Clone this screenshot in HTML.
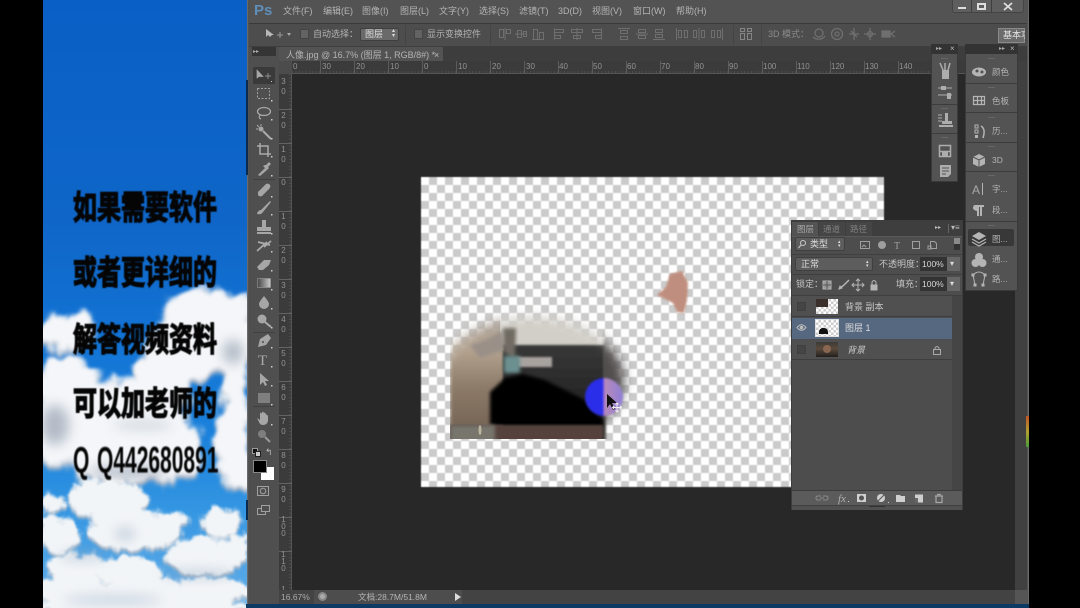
<!DOCTYPE html>
<html><head><meta charset="utf-8"><style>
html,body{margin:0;padding:0;background:#000;width:1080px;height:608px;overflow:hidden}
*{box-sizing:border-box}
body{font-family:"Liberation Sans","Noto Sans CJK SC",sans-serif;position:relative}
.a{position:absolute}
.t{position:absolute;white-space:nowrap;color:#b4b4b4;font-size:9px;line-height:12px;filter:blur(.35px)}
.big{position:absolute;left:73px;width:144px;white-space:nowrap;color:#050505;font-weight:700;font-size:24px;line-height:24px;height:24px;transform-origin:0 50%;transform:scaleY(1.38);font-family:"Noto Sans CJK SC",sans-serif;-webkit-text-stroke:1px #050505;filter:blur(.4px)}
.q{position:absolute;white-space:nowrap;color:#050505;font-weight:700;font-size:21px;line-height:24px;height:24px;top:450px;transform-origin:0 50%;transform:scaleY(1.78);font-family:"Liberation Sans",sans-serif;filter:blur(.4px)}
.r{position:absolute;top:62px;font-size:8px;line-height:10px;color:#929292;filter:blur(.3px)}
.v{position:absolute;left:280px;width:7px;font-size:8px;line-height:10px;color:#929292;text-align:center;filter:blur(.3px)}
.dock{position:absolute;background:#535353;}
.sep{position:absolute;height:1px;background:#3c3c3c}
.g{position:absolute;width:7px;height:1px;background:#666}
</style></head><body>

<!-- Sky -->
<div class="a" style="left:43px;top:0;width:204px;height:608px;overflow:hidden;background:linear-gradient(#0a5fc6 0,#0f66c8 220px,#1273d4 340px,#1b82dc 440px,#3496e2 510px,#62aee8 608px)">
<svg width="204" height="608" style="position:absolute;left:0;top:0">
<defs>
<filter id="cf" x="-10%" y="-10%" width="120%" height="120%" filterUnits="objectBoundingBox"><feGaussianBlur in="SourceGraphic" stdDeviation="2.500" result="bl"/><feTurbulence type="fractalNoise" baseFrequency=".055" numOctaves="3" seed="7" result="n"/><feDisplacementMap in="bl" in2="n" scale="20" xChannelSelector="R" yChannelSelector="G" result="d"/><feGaussianBlur in="d" stdDeviation="1.200"/></filter>
<filter id="cs" x="-10%" y="-10%" width="120%" height="120%"><feGaussianBlur in="SourceGraphic" stdDeviation="1.500" result="bl"/><feTurbulence type="fractalNoise" baseFrequency=".09" numOctaves="3" seed="3" result="n"/><feDisplacementMap in="bl" in2="n" scale="14" xChannelSelector="R" yChannelSelector="G" result="d"/><feGaussianBlur in="d" stdDeviation=".8"/></filter>
<filter id="b6" x="-60%" y="-60%" width="220%" height="220%"><feGaussianBlur stdDeviation="6"/></filter>
<g id="up">
<ellipse cx="165" cy="312" rx="46" ry="22"/><ellipse cx="185" cy="340" rx="28" ry="36"/><ellipse cx="140" cy="345" rx="36" ry="26"/>
<ellipse cx="130" cy="368" rx="38" ry="16"/><ellipse cx="192" cy="385" rx="12" ry="30"/>
<ellipse cx="190" cy="440" rx="17" ry="46"/><ellipse cx="200" cy="470" rx="14" ry="16"/>
<ellipse cx="22" cy="332" rx="26" ry="17"/><ellipse cx="36" cy="320" rx="14" ry="8"/>
<ellipse cx="24" cy="385" rx="30" ry="30"/><ellipse cx="22" cy="430" rx="36" ry="34"/>
<ellipse cx="90" cy="400" rx="55" ry="22"/><ellipse cx="110" cy="388" rx="36" ry="14"/>
<ellipse cx="105" cy="440" rx="52" ry="34"/><ellipse cx="60" cy="440" rx="42" ry="34"/>
<ellipse cx="125" cy="455" rx="35" ry="26"/><ellipse cx="85" cy="470" rx="55" ry="12"/>
</g>
<g id="lo">
<ellipse cx="65" cy="500" rx="40" ry="20"/><ellipse cx="50" cy="485" rx="20" ry="6"/><ellipse cx="10" cy="503" rx="12" ry="9"/>
<ellipse cx="92" cy="530" rx="48" ry="20"/><ellipse cx="130" cy="522" rx="14" ry="10"/>
<ellipse cx="178" cy="523" rx="20" ry="15"/>
<ellipse cx="17" cy="536" rx="20" ry="18"/><ellipse cx="8" cy="525" rx="10" ry="10"/>
<ellipse cx="162" cy="556" rx="40" ry="18"/><ellipse cx="195" cy="548" rx="12" ry="14"/>
<ellipse cx="85" cy="570" rx="34" ry="14"/><ellipse cx="35" cy="568" rx="30" ry="14"/>
<ellipse cx="30" cy="590" rx="42" ry="14"/><ellipse cx="105" cy="590" rx="46" ry="13"/><ellipse cx="165" cy="590" rx="42" ry="12"/><ellipse cx="100" cy="606" rx="110" ry="9"/>
</g>
</defs>
<use href="#up" fill="#a9b5c6" filter="url(#cf)" transform="translate(0,4)"/>
<use href="#up" fill="#f4f6f9" filter="url(#cf)"/>
<g filter="url(#b6)" fill="#98a3b2" opacity=".7">
<ellipse cx="12" cy="425" rx="14" ry="20"/><ellipse cx="85" cy="472" rx="40" ry="6"/><ellipse cx="190" cy="352" rx="10" ry="12"/><ellipse cx="100" cy="425" rx="30" ry="5" opacity=".5"/>
</g>
<use href="#lo" fill="#9fb2c8" filter="url(#cs)" transform="translate(0,3)"/>
<use href="#lo" fill="#f2f5f8" filter="url(#cs)"/>
<g filter="url(#b6)" fill="#9cadc2" opacity=".55"><ellipse cx="82" cy="534" rx="10" ry="6"/><ellipse cx="40" cy="556" rx="24" ry="4"/><ellipse cx="155" cy="574" rx="36" ry="4"/><ellipse cx="70" cy="600" rx="50" ry="4"/></g>
</svg>
</div>
<div class="big" style="top:193px">如果需要软件</div>
<div class="big" style="top:258px">或者更详细的</div>
<div class="big" style="top:325px">解答视频资料</div>
<div class="big" style="top:389px">可以加老师的</div>
<div class="q" style="left:73px">Q</div>
<div class="q" style="left:97px">Q442680891</div>

<!-- Window -->
<div class="a" style="left:247px;top:0;width:782px;height:604px;background:#535353;border-left:1px solid #6a6a6a;border-right:1px solid #6a6a6a"></div>
<div class="a" style="left:246px;top:604px;width:783px;height:4px;background:#0d3a63"></div>
<div class="a" style="left:246px;top:80px;width:2px;height:95px;background:#0a2a50"></div>
<div class="a" style="left:246px;top:500px;width:2px;height:20px;background:#0a2a50"></div>

<!-- Menu -->
<div class="t" style="left:254px;top:2px;font-size:15px;line-height:17px;font-weight:700;color:#5f8fb8">Ps</div>
<div class="t" style="left:283px;top:5px">文件(F)</div>
<div class="t" style="left:323px;top:5px">编辑(E)</div>
<div class="t" style="left:362px;top:5px">图像(I)</div>
<div class="t" style="left:400px;top:5px">图层(L)</div>
<div class="t" style="left:439px;top:5px">文字(Y)</div>
<div class="t" style="left:479px;top:5px">选择(S)</div>
<div class="t" style="left:519px;top:5px">滤镜(T)</div>
<div class="t" style="left:558px;top:5px">3D(D)</div>
<div class="t" style="left:592px;top:5px">视图(V)</div>
<div class="t" style="left:633px;top:5px">窗口(W)</div>
<div class="t" style="left:676px;top:5px">帮助(H)</div>
<!-- win buttons -->
<div class="a" style="left:952px;top:0;width:72px;height:13px;background:#5e5e5e;border:1px solid #444;border-top:0;border-radius:0 0 3px 3px"></div>
<div class="a" style="left:971px;top:0;width:1px;height:13px;background:#3f3f3f"></div>
<div class="a" style="left:991px;top:0;width:1px;height:13px;background:#3f3f3f"></div>
<div class="a" style="left:958px;top:7px;width:8px;height:2px;background:#ddd"></div>
<div class="a" style="left:977px;top:3px;width:9px;height:7px;border:2px solid #ddd"></div>
<svg class="a" style="left:1003px;top:2px" width="10" height="9"><path d="M1 1L9 8M9 1L1 8" stroke="#ddd" stroke-width="1.800"/></svg>

<!-- Options -->
<div class="a" style="left:249px;top:23px;width:778px;height:24px;background:#4d4d4d;border-top:1px solid #3a3a3a;border-bottom:1px solid #3e3e3e"></div>
<svg class="a" style="left:265px;top:28px" width="26" height="12"><path d="M1 1V9L3 7 5 9 7 7H9Z" fill="#b8b8b8"/><path d="M12 7H18M15 4V10" stroke="#999"/><path d="M22 5H26L24 8Z" fill="#aaa"/></svg>
<div class="a" style="left:300px;top:29px;width:9px;height:10px;background:#636363;border:1px solid #444"></div>
<div class="t" style="left:313px;top:28px">自动选择：</div>
<div class="a" style="left:360px;top:28px;width:39px;height:13px;background:#6a6a6a;border:1px solid #3f3f3f;border-radius:2px"></div>
<div class="t" style="left:365px;top:28px;color:#ddd">图层</div>
<div class="t" style="left:392px;top:29px;font-size:6px;line-height:5px;color:#ddd">▴<br>▾</div>
<div class="a" style="left:414px;top:29px;width:9px;height:10px;background:#636363;border:1px solid #444"></div>
<div class="t" style="left:427px;top:28px">显示变换控件</div>
<svg class="a" style="left:495px;top:26px;filter:blur(.3px)" width="235" height="16" fill="none" stroke="#6f6f6f">
<g transform="translate(10,8)"><path d="M0 -6V6M-5.500 -4.500h4v8h-4ZM1.500 -4.500h4v4h-4Z"/></g>
<g transform="translate(26,8)"><path d="M-6 0H6M-3.500 -3.500h4v7h-4ZM2.500 -2.500h3v5h-3Z"/></g>
<g transform="translate(43,8)"><path d="M-6 5.500H6M-4.500 -4.500h4v10h-4ZM1.500 -1.500h4v7h-4Z"/></g>
<g transform="translate(65,8)"><path d="M-5.500 -5.500v11M-5.500 -4.500h9v3h-9ZM-5.500 1.500h6v3h-6Z"/></g>
<g transform="translate(82,8)"><path d="M0 -6v12M-5.500 -4.500h11v3h-11ZM-3.500 1.500h7v3h-7Z"/></g>
<g transform="translate(101,8)"><path d="M5.500 -5.500v11M-3.500 -4.500h9v3h-9ZM-.5 1.500h6v3h-6Z"/></g>
<g transform="translate(129,8)"><path d="M-6 -5.500H6M-3.500 -3.500h7v3h-7ZM-3.500 2.500h7v3h-7Z"/></g>
<g transform="translate(147,8)"><path d="M-6 0H6M-3.500 -4.500h7v3h-7ZM-3.500 1.500h7v3h-7Z"/></g>
<g transform="translate(164,8)"><path d="M-6 5.500H6M-3.500 -4.500h7v3h-7ZM-3.500 .5h7v3h-7Z"/></g>
<g transform="translate(187,8)"><path d="M-5.500 -6v12M-3.500 -3.500h3v7h-3ZM2.500 -3.500h3v7h-3Z"/></g>
<g transform="translate(204,8)"><path d="M0 -6v12M-5.500 -3.500h3v7h-3ZM2.500 -3.500h3v7h-3Z"/></g>
<g transform="translate(222,8)"><path d="M5.500 -6v12M-5.500 -3.500h3v7h-3ZM.5 -3.500h3v7h-3Z"/></g>
</svg>
<svg class="a" style="left:739px;top:27px" width="16" height="14" fill="none" stroke="#858585"><path d="M1.500 1.500h4v3h-4ZM8.500 1.500h4v3h-4ZM1.500 6.500h4v6h-4ZM8.500 6.500h4v6h-4Z"/></svg>
<div class="a" style="left:490px;top:25px;width:1px;height:20px;background:#444"></div>
<div class="a" style="left:405px;top:25px;width:1px;height:20px;background:#444"></div>
<div class="a" style="left:733px;top:25px;width:1px;height:20px;background:#444"></div>
<div class="a" style="left:761px;top:25px;width:1px;height:20px;background:#444"></div>
<div class="t" style="left:768px;top:28px;color:#8b8b8b">3D 模式：</div>
<svg class="a" style="left:812px;top:27px;filter:blur(.3px)" width="86" height="15" fill="none" stroke="#6f6f6f" stroke-width="1.300"><circle cx="7" cy="6" r="4"/><path d="M1 10C4 13 10 13 13 9"/><circle cx="25" cy="7" r="5.500"/><circle cx="25" cy="7" r="2"/><path d="M42 1V13M37 7H47M39 4L45 10"/><path d="M58 1V13M52 7H64"/><circle cx="58" cy="7" r="2.500"/><rect x="70" y="4" width="8" height="6" fill="#6f6f6f"/><path d="M83 4L79 7 83 10"/></svg>
<div class="a" style="left:998px;top:28px;width:27px;height:15px;background:#6c6c6c;border:1px solid #8a8a8a;overflow:hidden"></div>
<div class="t" style="left:1003px;top:29px;color:#e4e4e4;width:22px;overflow:hidden">基本功</div>

<!-- Tab row -->
<div class="a" style="left:249px;top:47px;width:778px;height:14px;background:#3d3d3d"></div>
<div class="a" style="left:279px;top:47px;width:164px;height:14px;background:#535353"></div>
<div class="t" style="left:286px;top:49px;color:#b4b4b4">人像.jpg @ 16.7% (图层 1, RGB/8#) *</div>
<div class="t" style="left:434px;top:49px;color:#bbb">×</div>

<!-- Canvas area -->
<div class="a" style="left:279px;top:61px;width:748px;height:529px;background:#282828"></div>
<!-- rulers -->
<div class="a" style="left:279px;top:61px;width:748px;height:13px;background:#3b3b3b;border-bottom:1px solid #555"></div>
<div class="a" style="left:279px;top:61px;width:13px;height:529px;background:#3b3b3b;border-right:1px solid #555"></div>
<div class="a" style="left:279px;top:61px;width:13px;height:13px;background:#4c4c4c"></div>
<div class="a" style="left:320px;top:61px;width:611px;height:12px;background:repeating-linear-gradient(90deg,#5c5c5c 0 1px,transparent 1px 34px)"></div>
<div class="a" style="left:292px;top:71px;width:639px;height:2px;background:repeating-linear-gradient(90deg,#4d4d4d 0 1px,transparent 1px 3.400px)"></div>
<div class="a" style="left:289px;top:74px;width:2px;height:516px;background:repeating-linear-gradient(#4d4d4d 0 1px,transparent 1px 3.400px)"></div>
<div class="a" style="left:279px;top:109px;width:13px;height:1px;background:#626262;box-shadow:0 34px #626262,0 68px #626262,0 102px #626262,0 136px #626262,0 170px #626262,0 204px #626262,0 238px #626262,0 272px #626262,0 306px #626262,0 340px #626262,0 374px #626262,0 408px #626262,0 442px #626262"></div>

<span class="r" style="left:293px">0</span><span class="r" style="left:322px">30</span><span class="r" style="left:356px">20</span><span class="r" style="left:390px">10</span><span class="r" style="left:424px">0</span><span class="r" style="left:458px">10</span><span class="r" style="left:492px">20</span><span class="r" style="left:526px">30</span><span class="r" style="left:559px">40</span><span class="r" style="left:593px">50</span><span class="r" style="left:627px">60</span><span class="r" style="left:661px">70</span><span class="r" style="left:695px">80</span><span class="r" style="left:729px">90</span><span class="r" style="left:763px">100</span><span class="r" style="left:797px">110</span><span class="r" style="left:831px">120</span><span class="r" style="left:865px">130</span><span class="r" style="left:899px">140</span>

<div class="v" style="top:77px">3<br>0</div><div class="v" style="top:111px">2<br>0</div><div class="v" style="top:145px">1<br>0</div><div class="v" style="top:178px">0</div><div class="v" style="top:212px">1<br>0</div><div class="v" style="top:246px">2<br>0</div><div class="v" style="top:281px">3<br>0</div><div class="v" style="top:315px">4<br>0</div><div class="v" style="top:349px">5<br>0</div><div class="v" style="top:383px">6<br>0</div><div class="v" style="top:417px">7<br>0</div><div class="v" style="top:451px">8<br>0</div><div class="v" style="top:485px">9<br>0</div><div class="v" style="top:516px;line-height:7px">1<br>0<br>0</div><div class="v" style="top:551px;line-height:7px">1<br>1<br>0</div><div class="v" style="top:586px;line-height:7px">1</div>

<!-- Document -->
<div class="a" style="left:421px;top:177px;width:463px;height:310px;background-color:#fff;background-image:repeating-conic-gradient(#cbcbcb 0 25%,#fff 0 50%);background-size:16px 16px;filter:blur(.5px)"></div>
<svg class="a" style="left:421px;top:177px" width="463" height="310" viewBox="421 177 463 310">
<defs>
<filter id="fe" x="-30%" y="-30%" width="160%" height="160%"><feGaussianBlur stdDeviation="5.500"/></filter>
<filter id="s1" x="-20%" y="-20%" width="140%" height="140%"><feGaussianBlur stdDeviation="1.800"/></filter>
<filter id="s2" x="-20%" y="-20%" width="140%" height="140%"><feGaussianBlur stdDeviation="1"/></filter>
<mask id="m" maskUnits="userSpaceOnUse" x="421" y="177" width="463" height="310"><ellipse cx="532" cy="380" rx="92" ry="63" fill="#fff" filter="url(#fe)"/><rect x="440" y="392" width="166" height="60" fill="#fff" filter="url(#s2)"/></mask>
<clipPath id="c"><rect x="450" y="300" width="200" height="139"/></clipPath>
<linearGradient id="sk" x1="0" y1="0" x2="0" y2="1"><stop offset="0" stop-color="#a8a09a"/><stop offset=".3" stop-color="#b3a38f"/><stop offset=".6" stop-color="#8c7a68"/><stop offset="1" stop-color="#6f5e4e"/></linearGradient>
<linearGradient id="dk" x1="0" y1="0" x2="0" y2="1"><stop offset="0" stop-color="#383838"/><stop offset=".6" stop-color="#242424"/><stop offset="1" stop-color="#1a1a1a"/></linearGradient>
<linearGradient id="ph" x1="0" y1="0" x2="1" y2="0"><stop offset="0" stop-color="#2b2de8"/><stop offset=".5" stop-color="#2b2de8"/><stop offset=".5" stop-color="#b889b8"/><stop offset="1" stop-color="#8f7fd8"/></linearGradient>
</defs>
<path d="M657 295L666 287 670 274 682 271 688 283 687 300 684 313 677 312 673 303 663 298Z" fill="#c08e7e" filter="url(#s2)"/>
<g clip-path="url(#c)"><g mask="url(#m)">
<rect x="450" y="310" width="62" height="130" fill="url(#sk)" filter="url(#s1)"/>
<rect x="500" y="300" width="150" height="50" fill="#d2cfc8"/>
<rect x="503" y="345" width="150" height="95" fill="url(#dk)" filter="url(#s2)"/>
<path d="M603 300H660V440H603Z" fill="#5a5654" opacity=".8" filter="url(#s2)"/>
<path d="M470 345Q490 340 502 330L505 350 480 358Z" fill="#9a9088" filter="url(#s1)"/>
<path d="M503 328L516 328 515 360 504 352Z" fill="#6f6a62" filter="url(#s1)"/>
<rect x="517" y="357" width="35" height="10" fill="#a8a39f" filter="url(#s2)"/>
<rect x="504" y="356" width="16" height="17" fill="#6c9090" filter="url(#s1)"/>
<path d="M490 392L505 378 523 374 545 380 565 390 585 400 603 420V426H490Z" fill="#040405" filter="url(#s1)"/>
<path d="M450 425H603V445H450Z" fill="#55433e" filter="url(#s2)"/>
<path d="M450 425H495V445H450Z" fill="#77756c" filter="url(#s1)"/>
<ellipse cx="480" cy="430" rx="1.500" ry="5" fill="#bdb6a0"/>
</g></g>
<circle cx="604" cy="397" r="19" fill="url(#ph)" filter="url(#s2)"/>
<path d="M607 394V408L610 404 613 410 615 409 612 403 617 403Z" fill="#111"/>
<path d="M617 403V412M612.500 407.500H621.500M615.500 404.500L617 403 618.500 404.500M615.500 410.500L617 412 618.500 410.500M614 406L612.500 407.500 614 409M620 406L621.500 407.500 620 409" stroke="#eee" stroke-width="1" fill="none"/>
</svg>

<!-- Toolbar -->
<div class="a" style="left:249px;top:47px;width:30px;height:557px;background:#4f4f4f"></div>
<div class="a" style="left:252px;top:47px;width:24px;height:9px;background:#353535"></div>
<div class="t" style="left:253px;top:46px;font-size:6px;color:#aaa">▸▸</div>
<div class="a" style="left:253px;top:67px;width:22px;height:17px;background:#3a3a3a;border-radius:2px"></div>
<div class="a" style="left:253px;top:179px;width:22px;height:1px;background:#404040;box-shadow:0 153px #404040,0 227px #404040"></div>
<svg class="a" style="left:250px;top:60px;filter:blur(.35px)" width="28" height="390" viewBox="0 60 28 390" fill="#a6a6a6" stroke="none">
<g transform="translate(13,75)"><path d="M-6 -5V3L-4 1.500-2.500 1.500H0ZM2 1H8M5 -2V4" stroke="#a6a6a6" stroke-width=".7"/></g>
<g transform="translate(14,94)"><rect x="-6.500" y="-5.500" width="12" height="10" fill="none" stroke="#a0a0a0" stroke-dasharray="2 1.500"/></g>
<g transform="translate(14,113)" fill="none" stroke="#aaa" stroke-width="1.200"><ellipse cx="0" cy="-1.500" rx="6.500" ry="4"/><path d="M-4 2Q-6 5-3 6"/></g>
<g transform="translate(14,132)"><path d="M-1 -1L7 7" stroke="#aaa" stroke-width="2"/><circle cx="-3" cy="-3" r="2.500"/><path d="M-3 -8V-6M-8 -3H-6M-7 -7L-5 -5" stroke="#aaa"/></g>
<g transform="translate(14,150)" fill="none" stroke="#aaa" stroke-width="1.500"><path d="M-4 -7V4H7M-7 -4H4V7"/></g>
<g transform="translate(14,169)"><path d="M-6 6L1 -1 3 1-4 7Z"/><path d="M2 -4L5 -7 7 -5 4 -2 5 -1 3 1-1 -3 1 -4Z"/></g>
<g transform="translate(14,190)"><path d="M-6 2L2 -6Q5 -7 6 -5 7 -3 5 -1L-2 6Q-5 7-6 5Z"/></g>
<g transform="translate(14,208)"><path d="M-7 6Q-6 2-3 2L6 -7 7 -6-1 4Q-3 7-7 6Z"/></g>
<g transform="translate(14,227)"><path d="M-2 -7H2V0H7V4H-7V0H-2Z"/><rect x="-7" y="5" width="14" height="2"/></g>
<g transform="translate(14,245)" fill="none" stroke="#aaa" stroke-width="1.800"><path d="M-7 6L3 -3M-6 -3L6 0M0 2L7 -4"/></g>
<g transform="translate(14,264)"><path d="M-7 3L0 -4H7L5 1-1 6H-5Z"/></g>
<g transform="translate(14,283)"><defs><linearGradient id="gr"><stop offset="0" stop-color="#444"/><stop offset="1" stop-color="#ccc"/></linearGradient></defs><rect x="-6.500" y="-4.500" width="13" height="9" fill="url(#gr)" stroke="#999" stroke-width=".6"/></g>
<g transform="translate(14,302)"><path d="M0 -6Q5 0 5 2A5 5 0 0 1-5 2Q-5 0 0 -6Z"/></g>
<g transform="translate(14,321)"><circle cx="-2" cy="-2" r="4.500"/><path d="M1 1L7 6" stroke="#aaa" stroke-width="2"/></g>
<g transform="translate(14,341)"><path d="M-6 6L-4 -2 4 -7 7 -3 2 4Z"/><circle cx="-1" cy="1" r="1" fill="#4f4f4f"/></g>
<text x="8" y="365" font-family="Liberation Serif" font-size="15" fill="#aaa">T</text>
<g transform="translate(14,379)"><path d="M-4 -6V6L-1 3 1 7 3 6 1 2H5Z"/></g>
<g transform="translate(14,398)"><rect x="-6" y="-5" width="12" height="10" fill="#7f7f7f"/></g>
<g transform="translate(14,418)"><path d="M-7 0L-4 2V-5Q-3 -6-2 -4V0-6Q-1 -7 0 -5V0-5Q1 -6 2 -4V0-3Q3 -4 4 -2V3Q3 7-1 7-4 7-5 4Z"/></g>
<g transform="translate(14,436)"><circle cx="-2" cy="-2" r="4" fill="#7e7e7e"/><path d="M1 1L6 6" stroke="#999" stroke-width="2"/></g>
<g fill="#ccc"><rect x="21" y="81" width="1" height="1"/><rect x="21" y="100" width="1.500" height="1.500"/><rect x="21" y="119" width="1.500" height="1.500"/><rect x="21" y="138" width="1.500" height="1.500"/><rect x="21" y="156" width="1.500" height="1.500"/><rect x="21" y="175" width="1.500" height="1.500"/><rect x="21" y="196" width="1.500" height="1.500"/><rect x="21" y="214" width="1.500" height="1.500"/><rect x="21" y="233" width="1.500" height="1.500"/><rect x="21" y="251" width="1.500" height="1.500"/><rect x="21" y="270" width="1.500" height="1.500"/><rect x="21" y="289" width="1.500" height="1.500"/><rect x="21" y="308" width="1.500" height="1.500"/><rect x="21" y="327" width="1.500" height="1.500"/><rect x="21" y="347" width="1.500" height="1.500"/><rect x="21" y="366" width="1.500" height="1.500"/><rect x="21" y="385" width="1.500" height="1.500"/><rect x="21" y="404" width="1.500" height="1.500"/><rect x="21" y="424" width="1.500" height="1.500"/></g>
</svg>
<div class="a" style="left:252px;top:448px;width:6px;height:6px;background:#111;border:1px solid #999"></div>
<div class="a" style="left:255px;top:451px;width:6px;height:6px;background:#ccc;border:1px solid #222"></div>
<div class="t" style="left:265px;top:446px;font-size:9px;color:#bbb">↰</div>
<div class="a" style="left:261px;top:467px;width:13px;height:13px;background:#fff"></div>
<div class="a" style="left:253px;top:460px;width:14px;height:13px;background:#000;border:1px solid #888"></div>
<svg class="a" style="left:256px;top:484px" width="16" height="34" fill="none" stroke="#a0a0a0"><rect x="1.500" y="2.500" width="11" height="9"/><circle cx="7" cy="7" r="2.800"/><rect x="1.500" y="24.500" width="8" height="6"/><rect x="5.500" y="21.500" width="8" height="6" fill="#4f4f4f"/></svg>

<!-- Status -->
<div class="a" style="left:279px;top:590px;width:748px;height:14px;background:#434343"></div>
<div class="a" style="left:314px;top:590px;width:148px;height:14px;background:#4d4d4d"></div>
<div class="t" style="left:281px;top:591px;color:#aaa;font-size:8.500px">16.67%</div>
<div class="a" style="left:318px;top:592px;width:9px;height:9px;border-radius:50%;background:#aaa;border:2px solid #888"></div>
<div class="t" style="left:358px;top:591px;font-size:8.500px;color:#b5b5b5">文档:28.7M/51.8M</div>
<div class="a" style="left:455px;top:593px;border-left:6px solid #ddd;border-top:4px solid transparent;border-bottom:4px solid transparent"></div>
<div class="a" style="left:1015px;top:590px;width:12px;height:14px;background:#555"></div>
<div class="a" style="left:1015px;top:61px;width:12px;height:529px;background:#404040"></div>
<div class="a" style="left:1026px;top:416px;width:3px;height:16px;background:linear-gradient(#c05525,#b0a030)"></div>
<div class="a" style="left:1026px;top:432px;width:3px;height:15px;background:linear-gradient(#b0a030,#4a9a3a)"></div>

<!-- Dock 1 -->
<div class="dock" style="left:931px;top:44px;width:27px;height:138px;border:1px solid #3a3a3a"></div>
<div class="a" style="left:931px;top:44px;width:27px;height:10px;background:#333"></div>
<div class="t" style="left:936px;top:44px;font-size:6px;line-height:10px;color:#aaa">▸▸</div><div class="t" style="left:950px;top:44px;font-size:8px;line-height:10px;color:#bbb">×</div>
<div class="g" style="left:941px;top:58px"></div><div class="sep" style="left:932px;top:104px;width:25px"></div><div class="g" style="left:941px;top:108px"></div><div class="sep" style="left:932px;top:133px;width:25px"></div><div class="g" style="left:941px;top:137px"></div>
<svg class="a" style="left:936px;top:62px;filter:blur(.3px)" width="18" height="115" fill="#adadad" stroke="none">
<rect x="6" y="8" width="7" height="9"/><path d="M4 1L7 8M9 1V8M14 1L12 8" stroke="#adadad" stroke-width="1.500"/>
<path d="M2 26H16M2 33H16" stroke="#adadad"/><rect x="5" y="24" width="5" height="4"/><rect x="11" y="31" width="4" height="6"/>
<path d="M2 53H6M2 56H6M2 59H6" stroke="#adadad"/><rect x="9" y="51" width="3" height="8"/><rect x="6" y="59" width="10" height="3"/><rect x="3" y="63" width="14" height="2"/>
<path d="M3.500 83.500h11v11h-11ZM3.500 89.500h11" fill="none" stroke="#adadad" stroke-width="1.500"/><rect x="6" y="90" width="6" height="4"/>
<path d="M4 103H15V112L11 116H4Z"/><path d="M6 106H13M6 109H13M6 112H10" stroke="#535353"/>
</svg>

<!-- Dock 2 -->
<div class="dock" style="left:965px;top:44px;width:53px;height:247px;border:1px solid #3a3a3a"></div>
<div class="a" style="left:965px;top:44px;width:53px;height:10px;background:#333"></div>
<div class="t" style="left:999px;top:44px;font-size:6px;line-height:10px;color:#aaa">▸▸</div><div class="t" style="left:1010px;top:44px;font-size:8px;line-height:10px;color:#bbb">×</div>
<div class="sep" style="left:966px;top:83px;width:51px"></div><div class="sep" style="left:966px;top:112px;width:51px"></div><div class="sep" style="left:966px;top:142px;width:51px"></div><div class="sep" style="left:966px;top:171px;width:51px"></div><div class="sep" style="left:966px;top:221px;width:51px"></div>
<div class="g" style="left:988px;top:58px"></div><div class="g" style="left:988px;top:87px"></div><div class="g" style="left:988px;top:117px"></div><div class="g" style="left:988px;top:146px"></div><div class="g" style="left:988px;top:175px"></div><div class="g" style="left:988px;top:225px"></div>
<div class="a" style="left:968px;top:229px;width:46px;height:17px;background:#383838;border-radius:2px"></div>
<svg class="a" style="left:970px;top:62px;filter:blur(.3px)" width="20" height="225" fill="#b4b4b4">
<ellipse cx="9" cy="10" rx="7" ry="4.500"/><circle cx="7" cy="9" r="1.500" fill="#535353"/><circle cx="12" cy="10" r="1.500" fill="#535353"/>
<path d="M3.500 34.500h11v8h-11ZM3.500 38.500h11M7.500 34.500v8M11.500 34.500v8" fill="none" stroke="#b4b4b4" stroke-width="1.200"/>
<rect x="5" y="63" width="3" height="3" fill="none" stroke="#b4b4b4"/><rect x="5" y="68" width="3" height="3" fill="none" stroke="#b4b4b4"/><rect x="5" y="73" width="3" height="3"/><path d="M11 64Q16 67 13 76" fill="none" stroke="#b4b4b4" stroke-width="1.500"/>
<path d="M9 92L15 95V102L9 105 3 102V95Z"/><path d="M3 95L9 98 15 95M9 98V105" stroke="#535353" fill="none"/>
<text x="2" y="132" font-size="12" font-family="Liberation Sans" fill="#aaa">A</text><rect x="12" y="121" width="1" height="12"/>
<path d="M5 143H14V145H12V154H10V145H9V154H7V149Q3 148 3 146Q3 143 5 143Z"/>
<path d="M9 170L16 174 9 178 2 174Z"/><path d="M2 177L9 181 16 177M2 180L9 184 16 180" stroke="#b4b4b4" fill="none" stroke-width="1.200"/>
<circle cx="9" cy="195" r="4"/><circle cx="5.500" cy="201" r="4"/><circle cx="12.500" cy="201" r="4"/>
<path d="M3 213Q9 207 15 213M3 213L5 223M15 213L13 223" fill="none" stroke="#b4b4b4"/><rect x="1.500" y="211.500" width="3" height="3"/><rect x="13.500" y="211.500" width="3" height="3"/><rect x="3.500" y="221.500" width="3" height="3"/><rect x="11.500" y="221.500" width="3" height="3"/>
</svg>
<div class="t" style="left:992px;top:66px;font-size:8.500px">颜色</div>
<div class="t" style="left:992px;top:95px;font-size:8.500px">色板</div>
<div class="t" style="left:992px;top:125px;font-size:8.500px">历...</div>
<div class="t" style="left:992px;top:154px;font-size:8.500px">3D</div>
<div class="t" style="left:992px;top:183px;font-size:8.500px">字...</div>
<div class="t" style="left:992px;top:204px;font-size:8.500px">段...</div>
<div class="t" style="left:992px;top:233px;font-size:8.500px">图...</div>
<div class="t" style="left:992px;top:253px;font-size:8.500px">通...</div>
<div class="t" style="left:992px;top:273px;font-size:8.500px">路...</div>

<!-- Layers panel -->
<div class="a" style="left:791px;top:220px;width:172px;height:290px;background:#4d4d4d;border:1px solid #3d3d3d"></div>
<div class="a" style="left:792px;top:221px;width:170px;height:15px;background:#3e3e3e"></div>
<div class="a" style="left:792px;top:222px;width:26px;height:14px;background:#535353"></div>
<div class="a" style="left:819px;top:222px;width:26px;height:14px;background:#454545"></div>
<div class="a" style="left:846px;top:222px;width:26px;height:14px;background:#454545"></div>
<div class="t" style="left:797px;top:223px;color:#aaa;font-size:8.500px">图层</div>
<div class="t" style="left:823px;top:223px;color:#7f7f7f;font-size:8.500px">通道</div>
<div class="t" style="left:850px;top:223px;color:#7f7f7f;font-size:8.500px">路径</div>
<div class="t" style="left:935px;top:222px;font-size:6px;color:#bbb">▸▸</div>
<div class="a" style="left:948px;top:224px;width:1px;height:9px;background:#666"></div>
<div class="t" style="left:951px;top:222px;font-size:8px;color:#bbb">▾≡</div>
<div class="a" style="left:792px;top:236px;width:170px;height:1px;background:#5a5a5a"></div>
<div class="a" style="left:795px;top:237px;width:50px;height:14px;background:#5d5d5d;border:1px solid #404040;border-radius:2px"></div>
<svg class="a" style="left:797px;top:239px" width="10" height="10" fill="none" stroke="#ccc"><circle cx="6" cy="4" r="2.500"/><path d="M4 6L1.500 9"/></svg>
<div class="t" style="left:810px;top:238px;color:#ddd;font-size:9px">类型</div>
<div class="t" style="left:838px;top:240px;font-size:5px;line-height:4px;color:#ddd">▴<br>▾</div>
<svg class="a" style="left:858px;top:238px;filter:blur(.3px)" width="105" height="14" fill="none" stroke="#9f9f9f"><rect x="2.500" y="3.500" width="9" height="7"/><path d="M4 9L6 7 8 9"/><circle cx="24" cy="7" r="3.500" fill="#9f9f9f"/><text x="36" y="11" font-family="Liberation Serif" font-size="10" fill="#9f9f9f" stroke="none">T</text><rect x="54.500" y="3.500" width="7" height="7"/><path d="M72.500 3.500h4l2 2v5h-6ZM70 8h3v3h-3Z"/></svg>
<div class="a" style="left:954px;top:238px;width:6px;height:12px;background:linear-gradient(#8a8a8a 50%,#333 50%)"></div>
<div class="a" style="left:792px;top:254px;width:170px;height:1px;background:#3f3f3f"></div>
<div class="a" style="left:795px;top:257px;width:78px;height:14px;background:#5d5d5d;border:1px solid #404040;border-radius:2px"></div>
<div class="t" style="left:801px;top:258px;color:#ddd;font-size:9px">正常</div>
<div class="t" style="left:866px;top:260px;font-size:5px;line-height:4px;color:#ddd">▴<br>▾</div>
<div class="t" style="left:879px;top:258px;font-size:9px;color:#c4c4c4">不透明度：</div>
<div class="a" style="left:920px;top:257px;width:27px;height:14px;background:#333"></div>
<div class="a" style="left:947px;top:257px;width:13px;height:14px;background:#666"></div>
<div class="t" style="left:922px;top:258px;font-size:8.500px;color:#d8d8d8">100%</div>
<div class="t" style="left:950px;top:258px;font-size:8px;color:#ddd">▾</div>
<div class="a" style="left:792px;top:274px;width:170px;height:1px;background:#3f3f3f"></div>
<div class="t" style="left:796px;top:278px;font-size:9px;color:#c4c4c4">锁定：</div>
<svg class="a" style="left:821px;top:278px;filter:blur(.3px)" width="60" height="14" fill="none" stroke="#b4b4b4"><rect x="2" y="3" width="8" height="8" fill="#999"/><path d="M2 7H10M6 3V11" stroke="#555"/><path d="M18 11L23 7 28 2" stroke-width="1.500"/><path d="M18 11L21 10 19 8Z" fill="#b4b4b4"/><path d="M37 1V13M31 7H43M35 3L37 1 39 3M35 11L37 13 39 11M33 5L31 7 33 9M41 5L43 7 41 9"/><rect x="50" y="7" width="6" height="5" fill="#b4b4b4"/><path d="M51 7V4Q53 1 55 4V7"/></svg>
<div class="t" style="left:896px;top:278px;font-size:9px;color:#c4c4c4">填充：</div>
<div class="a" style="left:920px;top:277px;width:27px;height:14px;background:#333"></div>
<div class="a" style="left:947px;top:277px;width:13px;height:14px;background:#666"></div>
<div class="t" style="left:922px;top:278px;font-size:8.500px;color:#d8d8d8">100%</div>
<div class="t" style="left:950px;top:278px;font-size:8px;color:#ddd">▾</div>
<div class="a" style="left:792px;top:295px;width:170px;height:1px;background:#3f3f3f"></div>

<!-- layers -->
<div class="a" style="left:792px;top:296px;width:160px;height:21px;background:#505050;border-bottom:1px solid #3e3e3e"></div>
<div class="a" style="left:792px;top:318px;width:160px;height:21px;background:#566880"></div>
<div class="a" style="left:792px;top:340px;width:160px;height:20px;background:#505050;border-bottom:1px solid #3e3e3e"></div>
<div class="a" style="left:952px;top:296px;width:10px;height:194px;background:#454545"></div>
<div class="a" style="left:797px;top:302px;width:9px;height:9px;background:#454545;border:1px solid #404040"></div>
<div class="a" style="left:797px;top:345px;width:9px;height:9px;background:#454545;border:1px solid #404040"></div>
<svg class="a" style="left:796px;top:323px" width="11" height="9"><path d="M1 4.500Q5.500 -1 10 4.500Q5.500 10 1 4.500Z" fill="none" stroke="#bbb"/><circle cx="5.500" cy="4.500" r="1.800" fill="#bbb"/></svg>
<div class="a" style="left:816px;top:299px;width:22px;height:15px;background-color:#fff;background-image:repeating-conic-gradient(#ccc 0 25%,#fff 0 50%);background-size:5px 5px;overflow:hidden"><div style="position:absolute;left:0;top:0;width:12px;height:8px;background:#3a2f2a"></div></div>
<div class="a" style="left:815px;top:319px;width:24px;height:18px;background-color:#fff;border:1px solid #ddd;background-image:repeating-conic-gradient(#ccc 0 25%,#fff 0 50%);background-size:5px 5px;overflow:hidden"><div style="position:absolute;left:3px;top:8px;width:9px;height:6px;background:#111;border-radius:4px 4px 0 0"></div></div>
<div class="a" style="left:816px;top:342px;width:22px;height:15px;background:linear-gradient(#3b3b36,#5b4a3c 45%,#23201e)"><div style="position:absolute;left:7px;top:3px;width:8px;height:8px;border-radius:50%;background:#8a6650"></div></div>
<div class="t" style="left:845px;top:301px;color:#c8c8c8;font-size:9px">背景 副本</div>
<div class="t" style="left:845px;top:322px;color:#dcdcdc;font-size:9px">图层 1</div>
<div class="t" style="left:847px;top:344px;color:#c8c8c8;font-size:9px;font-style:italic">背景</div>
<svg class="a" style="left:932px;top:345px" width="10" height="10" fill="none" stroke="#aaa"><rect x="1.500" y="4.500" width="7" height="5"/><path d="M3 4.500V3Q5 0 7 3V4.500"/></svg>

<!-- layers bottom -->
<div class="a" style="left:792px;top:490px;width:170px;height:15px;background:#5b5b5b;border-top:1px solid #3c3c3c"></div>
<div class="a" style="left:792px;top:505px;width:170px;height:5px;background:#505050;border-top:1px solid #404040"></div>
<div class="a" style="left:869px;top:506px;width:16px;height:1px;background:#333"></div>
<svg class="a" style="left:815px;top:491px;filter:blur(.25px)" width="135" height="14">
<path d="M6 5H3Q1 5 1 7T3 9H6M8 5H11Q13 5 13 7T11 9H8M5 7H9" fill="none" stroke="#8a8a8a"/>
<text x="23" y="11" font-family="Liberation Serif" font-style="italic" font-size="11" fill="#b0b0b0">fx</text><rect x="33" y="10" width="1" height="1" fill="#ccc"/>
<rect x="42" y="3" width="9" height="8" fill="#cfcfcf"/><circle cx="46.500" cy="7" r="2.500" fill="#555"/>
<circle cx="66" cy="7" r="4" fill="#cfcfcf"/><path d="M63 10L69 4" stroke="#555"/><rect x="73" y="11" width="1" height="1" fill="#ccc"/>
<path d="M81 4H85L86 5H90V11H81Z" fill="#cfcfcf"/>
<rect x="100" y="3.500" width="8" height="8" fill="#cfcfcf"/><path d="M100 7H103V11.500H100Z" fill="#666"/>
<path d="M120 5H128M122 3.500H126M121 5V11.500H127V5" fill="none" stroke="#a8a8a8" stroke-width="1.200"/>
</svg>
</body></html>
